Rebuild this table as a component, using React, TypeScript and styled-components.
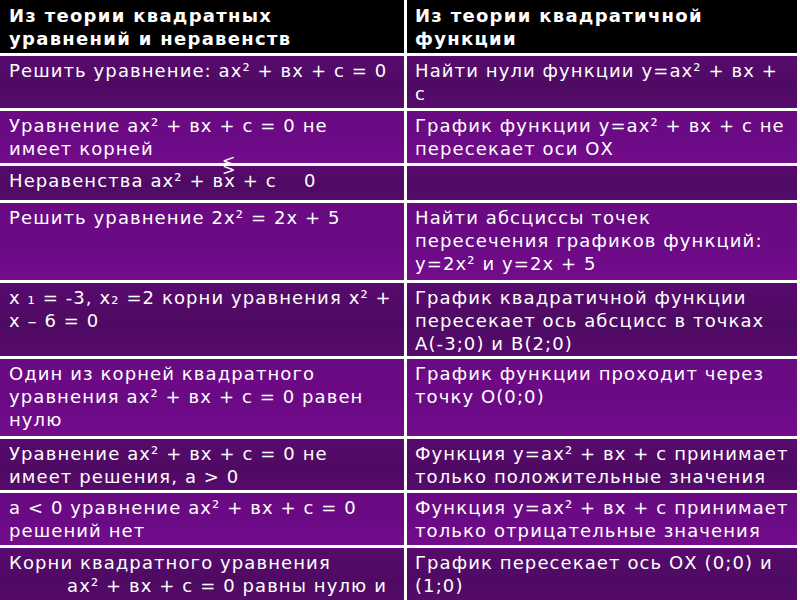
import styled, { createGlobalStyle, css } from "styled-components";

const GlobalStyle = createGlobalStyle`
  html, body {
    margin: 0;
    padding: 0;
    background: #ffffff;
    overflow: hidden;
  }
`;

const Table = styled.div`
  width: 800px;
  height: 600px;
  display: grid;
  grid-template-columns: 404px 390px;
  grid-template-rows: 53px 52px 52px 34px 77px 73px 77px 51px 52px 60px;
  column-gap: 3px;
  row-gap: 3px;
  padding-right: 3px;
  background: #ffffff;
  overflow: hidden;
  font-family: "DejaVu Sans", "Liberation Sans", sans-serif;
  font-size: 18px;
  line-height: 23px;
  letter-spacing: 1.1px;
  color: #ffffff;
`;

const Cell = styled.div<{ tone: "head" | "dark" | "light"; padLeft?: number }>`
  position: relative;
  padding: 3px 0 0 ${({ padLeft }) => padLeft ?? 9}px;
  ${({ tone }) =>
    tone === "head"
      ? css`
          background: #000000;
          font-weight: bold;
          letter-spacing: 1.3px;
          padding-top: 4px;
        `
      : tone === "dark"
      ? css`
          background: linear-gradient(180deg, #580a6e 0%, #4e0a62 60%, #580a6e 100%);
        `
      : css`
          background: linear-gradient(180deg, #6a0a82 0%, #6c0a86 60%, #740c8c 100%);
        `}
`;

const Line = styled.div<{ indent?: number }>`
  white-space: pre;
  padding-left: ${({ indent }) => indent ?? 0}px;
`;

// the "<" / ">" sign that the slide drew stacked over the inequality
const Stacked = styled.div`
  position: absolute;
  left: 222px;
  top: -10px;
  display: flex;
  flex-direction: column;
  font-size: 16px;
  line-height: 9px;
  letter-spacing: 0;
`;

type Row = {
  tone: "head" | "dark" | "light";
  left: string[];
  right: string[];
  indent?: number[];
  mark?: boolean;
};

const rows: Row[] = [
  {
    tone: "head",
    left: ["Из теории квадратных", "уравнений и неравенств"],
    right: ["Из теории квадратичной", "функции"],
  },
  {
    tone: "dark",
    left: ["Решить уравнение: ах² + вх + с = 0"],
    right: ["Найти нули функции у=ах² + вх +", "с"],
  },
  {
    tone: "light",
    left: ["Уравнение ах² + вх + с = 0 не", "имеет корней"],
    right: ["График функции у=ах² + вх + с не", "пересекает оси ОХ"],
  },
  {
    tone: "dark",
    left: ["Неравенства ах² + вх + с    0"],
    right: [],
    mark: true,
  },
  {
    tone: "light",
    left: ["Решить уравнение 2х² = 2х + 5"],
    right: ["Найти абсциссы точек", "пересечения графиков функций:", "у=2х² и у=2х + 5"],
  },
  {
    tone: "dark",
    left: ["х ₁ = -3, х₂ =2 корни уравнения х² +", "х – 6 = 0"],
    right: ["График квадратичной функции", "пересекает ось абсцисс в точках", "А(-3;0) и В(2;0)"],
  },
  {
    tone: "light",
    left: ["Один из корней квадратного", "уравнения ах² + вх + с = 0 равен", "нулю"],
    right: ["График функции проходит через", "точку О(0;0)"],
  },
  {
    tone: "dark",
    left: ["Уравнение ах² + вх + с = 0 не", "имеет решения, а > 0"],
    right: ["Функция у=ах² + вх + с принимает", "только положительные значения"],
  },
  {
    tone: "light",
    left: ["а < 0 уравнение ах² + вх + с = 0", "решений нет"],
    right: ["Функция у=ах² + вх + с принимает", "только отрицательные значения"],
  },
  {
    tone: "dark",
    left: ["Корни квадратного уравнения", "ах² + вх + с = 0 равны нулю и"],
    right: ["График пересекает ось ОХ (0;0) и", "(1;0)"],
    indent: [0, 58],
  },
];

export default function App() {
  return (
    <>
      <GlobalStyle />
      <Table>
        {rows.map((row, i) => [
          <Cell key={`l${i}`} tone={row.tone}>
            {row.left.map((t, j) => (
              <Line key={j} indent={row.indent?.[j]}>
                {t}
              </Line>
            ))}
            {row.mark && (
              <Stacked>
                <span>&lt;</span>
                <span>&gt;</span>
              </Stacked>
            )}
          </Cell>,
          <Cell key={`r${i}`} tone={row.tone} padLeft={8}>
            {row.right.map((t, j) => (
              <Line key={j}>{t}</Line>
            ))}
          </Cell>,
        ])}
      </Table>
    </>
  );
}
